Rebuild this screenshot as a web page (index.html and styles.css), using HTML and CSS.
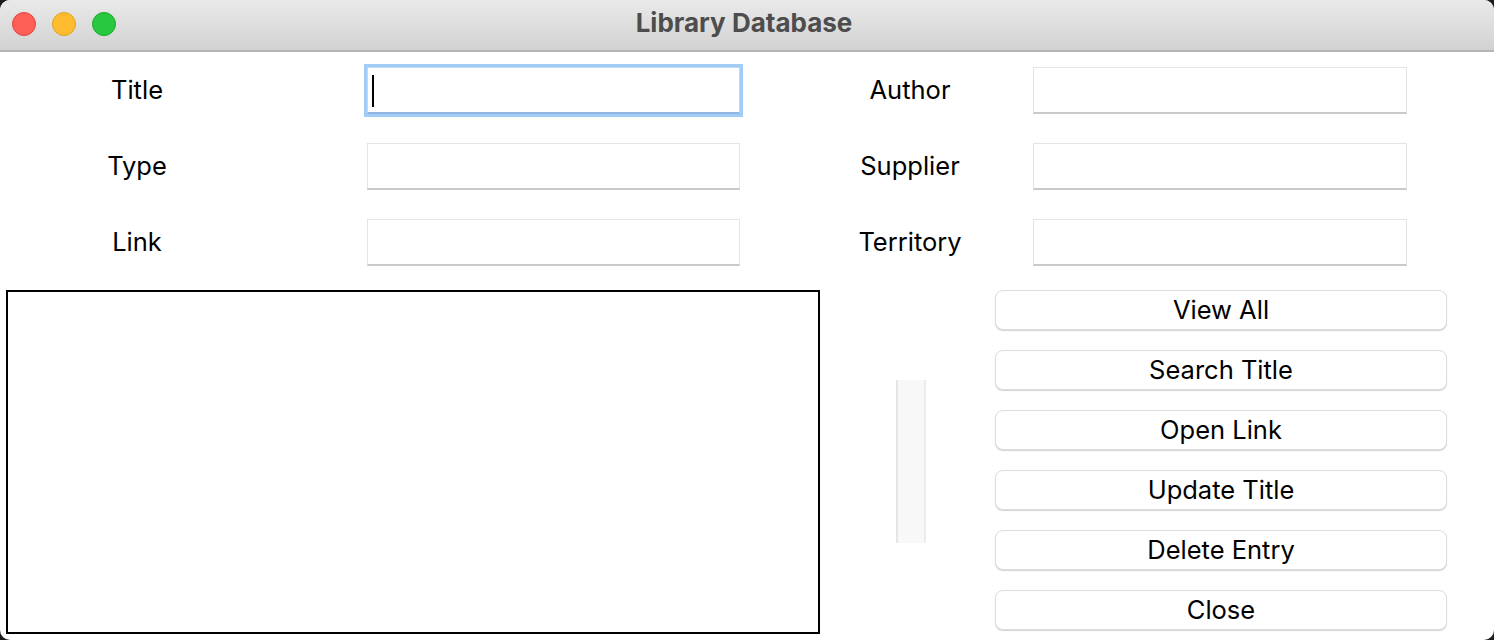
FILE: index.html
```html
<!DOCTYPE html>
<html lang="en">
<head>
    <meta charset="UTF-8">
    <title>Library Database</title>
    <link rel="stylesheet" href="styles.css">
</head>
<body>
    <div class="window">
        <div class="titlebar">
            <div class="lights">
                <span class="light red"></span>
                <span class="light yellow"></span>
                <span class="light green"></span>
            </div>
            <div class="title">Library Database</div>
        </div>

        <div class="form">
            <label class="lbl">Title</label>
            <div class="cell"><div class="entry left focused"><span class="caret"></span></div></div>
            <label class="lbl">Author</label>
            <div class="cell"><div class="entry right"></div></div>

            <label class="lbl">Type</label>
            <div class="cell"><div class="entry left"></div></div>
            <label class="lbl">Supplier</label>
            <div class="cell"><div class="entry right"></div></div>

            <label class="lbl">Link</label>
            <div class="cell"><div class="entry left"></div></div>
            <label class="lbl">Territory</label>
            <div class="cell"><div class="entry right"></div></div>
        </div>

        <div class="lower">
            <div class="listbox"></div>
            <div class="scrollbar"></div>
            <div class="buttons">
                <button>View All</button>
                <button>Search Title</button>
                <button>Open Link</button>
                <button>Update Title</button>
                <button>Delete Entry</button>
                <button>Close</button>
            </div>
        </div>
    </div>
</body>
</html>
```

FILE: styles.css
```css
body {
    margin: 0;
    background: #1c1c1c;
    font-family: Inter, "Liberation Sans", sans-serif;
}
.window {
    width: 1494px;
    height: 640px;
    background: #ffffff;
    border-radius: 10px;
    overflow: hidden;
}
.titlebar {
    height: 50px;
    border-bottom: 2px solid #b5b5b5;
    background: linear-gradient(#e9e9e9, #d2d2d2);
    display: flex;
    align-items: center;
    position: relative;
}
.lights {
    display: flex;
    gap: 16px;
    padding-left: 12px;
    margin-top: -3px;
}
.light {
    width: 22px;
    height: 22px;
    border-radius: 50%;
    border: 1px solid;
}
.red { background: #fe5f57; border-color: #e0443e; }
.yellow { background: #febc2e; border-color: #dea123; }
.green { background: #28c840; border-color: #1aab29; }
.title {
    position: absolute;
    left: 0;
    right: 6px;
    top: 7px;
    text-align: center;
    font-size: 26px;
    font-weight: 700;
    color: #4d4d4d;
}
.form {
    display: grid;
    grid-template-columns: 274px 546px 180px 494px;
    grid-auto-rows: 46px;
    row-gap: 30px;
    padding-top: 15px;
}
.lbl {
    display: flex;
    align-items: center;
    justify-content: center;
    font-size: 25.5px;
    color: #000;
    padding-bottom: 2px;
}
.entry {
    height: 44px;
    background: #fff;
    border: 1px solid #e4e4e4;
    border-bottom: 2px solid #c9c9c9;
    box-sizing: content-box;
    position: relative;
}
.entry.left {
    margin-left: 93px;
    width: 371px;
}
.entry.right {
    margin-left: 33px;
    width: 372px;
}
.entry.focused {
    border-color: #c2d9f2;
    border-bottom-color: #8fb4e0;
    box-shadow: 0 0 0 3px #a2cbf6;
}
.caret {
    position: absolute;
    left: 4px;
    top: 7px;
    width: 2px;
    height: 32px;
    background: #000;
}
.lower {
    display: flex;
    align-items: flex-start;
    margin-top: 25px;
    padding-left: 6px;
}
.listbox {
    width: 810px;
    height: 340px;
    border: 2px solid #000;
}
.scrollbar {
    width: 26px;
    height: 163px;
    margin-top: 90px;
    margin-left: 76px;
    background: #f8f8f8;
    border-left: 2px solid #e6e6e6;
    border-right: 2px solid #ececec;
}
.buttons {
    display: flex;
    flex-direction: column;
    gap: 20px;
    margin-left: 69px;
}
button {
    width: 452px;
    height: 40px;
    background: #fff;
    border: 1px solid #dedede;
    border-radius: 8px;
    box-shadow: 0 1px 1px rgba(0, 0, 0, 0.18);
    font-family: Inter, "Liberation Sans", sans-serif;
    font-size: 25.5px;
    color: #000;
    padding: 0 0 2px;
}
```
